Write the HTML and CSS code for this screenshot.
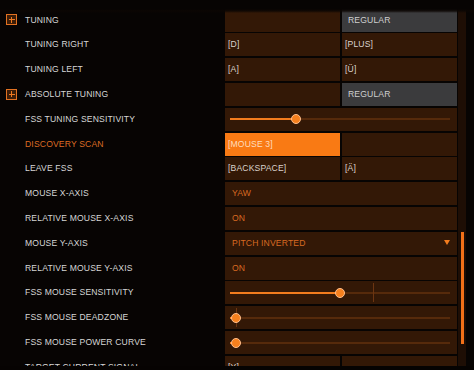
FILE: index.html
```html
<!DOCTYPE html>
<html lang="en">

<head>
    <meta charset="UTF-8">
    <meta name="viewport" content="width=device-width, initial-scale=1.0">
    <title>FSS Controls</title>
    <link rel="stylesheet" href="styles.css">
</head>

<body>
    <div class="panel">
        <div class="list">
            <div class="row">
                <div class="label has-icon"><span class="expand"></span>TUNING</div>
                <div class="value split">
                    <div class="cell"></div>
                    <div class="cell grey">REGULAR</div>
                </div>
            </div>
            <div class="row">
                <div class="label">TUNING RIGHT</div>
                <div class="value split">
                    <div class="cell">[D]</div>
                    <div class="cell">[PLUS]</div>
                </div>
            </div>
            <div class="row">
                <div class="label">TUNING LEFT</div>
                <div class="value split">
                    <div class="cell">[A]</div>
                    <div class="cell">[Ü]</div>
                </div>
            </div>
            <div class="row">
                <div class="label has-icon"><span class="expand"></span>ABSOLUTE TUNING</div>
                <div class="value split">
                    <div class="cell"></div>
                    <div class="cell grey">REGULAR</div>
                </div>
            </div>
            <div class="row">
                <div class="label">FSS TUNING SENSITIVITY</div>
                <div class="value cell slider">
                    <div class="track">
                        <div class="fill" style="width: 29.9%"></div>
                        <div class="knob" style="left: 29.9%"></div>
                    </div>
                </div>
            </div>
            <div class="row">
                <div class="label active">DISCOVERY SCAN</div>
                <div class="value split">
                    <div class="cell hot">[MOUSE 3]</div>
                    <div class="cell"></div>
                </div>
            </div>
            <div class="row">
                <div class="label">LEAVE FSS</div>
                <div class="value split">
                    <div class="cell">[BACKSPACE]</div>
                    <div class="cell">[Ä]</div>
                </div>
            </div>
            <div class="row">
                <div class="label">MOUSE X-AXIS</div>
                <div class="value cell option">YAW</div>
            </div>
            <div class="row">
                <div class="label">RELATIVE MOUSE X-AXIS</div>
                <div class="value cell option">ON</div>
            </div>
            <div class="row">
                <div class="label">MOUSE Y-AXIS</div>
                <div class="value cell option">PITCH INVERTED<span class="caret"></span></div>
            </div>
            <div class="row">
                <div class="label">RELATIVE MOUSE Y-AXIS</div>
                <div class="value cell option">ON</div>
            </div>
            <div class="row">
                <div class="label">FSS MOUSE SENSITIVITY</div>
                <div class="value cell slider">
                    <div class="track">
                        <div class="fill" style="width: 50%"></div>
                        <div class="tick" style="left: 64.9%"></div>
                        <div class="knob" style="left: 50%"></div>
                    </div>
                </div>
            </div>
            <div class="row">
                <div class="label">FSS MOUSE DEADZONE</div>
                <div class="value cell slider">
                    <div class="track">
                        <div class="fill" style="width: 2.7%"></div>
                        <div class="tick" style="left: 2.7%"></div>
                        <div class="knob" style="left: 2.7%"></div>
                    </div>
                </div>
            </div>
            <div class="row">
                <div class="label">FSS MOUSE POWER CURVE</div>
                <div class="value cell slider">
                    <div class="track">
                        <div class="fill" style="width: 2.7%"></div>
                        <div class="knob" style="left: 2.7%"></div>
                    </div>
                </div>
            </div>
            <div class="row">
                <div class="label">TARGET CURRENT SIGNAL</div>
                <div class="value split">
                    <div class="cell">[Y]</div>
                    <div class="cell"></div>
                </div>
            </div>
        </div>
        <div class="scrollbar">
            <div class="thumb"></div>
        </div>
    </div>
    <div class="fade-top"></div>
    <div class="fade-bottom"></div>
</body>

</html>
```

FILE: styles.css
```css
* {
    box-sizing: border-box;
}

body {
    margin: 0;
    padding: 0;
    height: 370px;
    overflow: hidden;
    background-color: #070403;
    font-family: "Liberation Sans", Arial, Helvetica, sans-serif;
    font-size: 8.6px;
    letter-spacing: 0.15px;
}

.panel {
    display: flex;
    padding-top: 8.7px;
}

.list {
    width: 457px;
}

.row {
    display: grid;
    grid-template-columns: 225px 232px;
    height: 23px;
    margin-bottom: 1.8px;
}

.label {
    display: flex;
    align-items: center;
    padding-left: 25px;
    padding-bottom: 1px;
    color: #d6d6d6;
}

.label.has-icon {
    padding-left: 6px;
}

.label.active {
    color: #dd6c24;
}

.expand {
    position: relative;
    width: 11px;
    height: 11px;
    margin-right: 8px;
    border: 1px solid #e27222;
    background: #3c1d08;
}

.expand::before,
.expand::after {
    content: "";
    position: absolute;
    background: #f07a20;
}

.expand::before {
    left: 1.5px;
    right: 1.5px;
    top: 4px;
    height: 1px;
}

.expand::after {
    top: 1.5px;
    bottom: 1.5px;
    left: 4px;
    width: 1px;
}

.split {
    display: grid;
    grid-template-columns: 1fr 1fr;
    gap: 2px;
}

.cell {
    display: flex;
    align-items: center;
    padding-left: 3px;
    padding-bottom: 1px;
    background: #331806;
    color: #d9d2cc;
}

.cell.grey {
    padding-left: 6px;
    background: #3b3b3d;
    color: #cfcfcf;
}

.cell.hot {
    background: #f97a14;
    color: #ffdcbc;
}

.cell.option {
    padding-left: 7px;
    color: #d86a22;
}

.caret {
    margin-left: auto;
    margin-right: 7px;
    width: 0;
    height: 0;
    border-left: 3.5px solid transparent;
    border-right: 3.5px solid transparent;
    border-top: 5px solid #f27c1e;
}

.cell.slider {
    padding: 0 7px 0 5px;
}

.track {
    position: relative;
    width: 100%;
    height: 2px;
    background: #562a0b;
}

.fill {
    height: 2px;
    background: #f27c1e;
}

.tick {
    position: absolute;
    top: -9px;
    width: 1px;
    height: 19px;
    background: #6c3511;
}

.knob {
    position: absolute;
    top: -4px;
    width: 10px;
    height: 10px;
    margin-left: -5px;
    border-radius: 50%;
    background: #f6801e;
    border: 1.5px solid #ffbe8c;
}

.scrollbar {
    width: 8px;
    margin-left: 1px;
    height: 380px;
    background: #1e0e05;
}

.thumb {
    width: 3.5px;
    height: 112px;
    margin-top: 223.3px;
    margin-left: 2.5px;
    background: #f27018;
}

.fade-top {
    position: absolute;
    top: 0;
    left: 0;
    right: 0;
    height: 13px;
    background: linear-gradient(#070403 0, #070403 9px, rgba(12, 6, 3, 0.85) 11px, rgba(7, 4, 3, 0) 13px);
}

.fade-bottom {
    position: absolute;
    bottom: 0;
    left: 0;
    right: 0;
    height: 4px;
    background: #060302;
}
```
